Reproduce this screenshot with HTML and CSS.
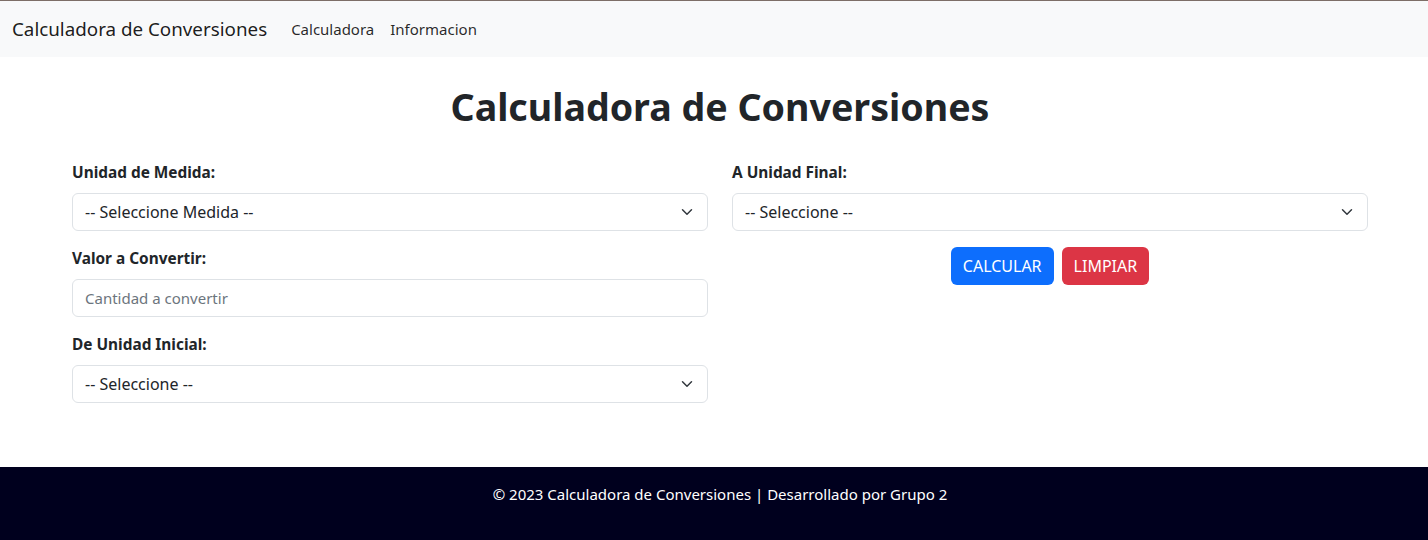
FILE: index.html
```html
<!DOCTYPE html>
<html lang="es">
<head>
    <meta charset="UTF-8">
    <meta name="viewport" content="width=device-width, initial-scale=1.0">
    <title>Calculadora de Conversiones</title>
    <link rel="stylesheet" href="styles.css">
</head>
<body>
    <nav class="navbar">
        <a class="brand" href="#">Calculadora de Conversiones</a>
        <ul class="nav-links">
            <li><a href="#">Calculadora</a></li>
            <li><a href="#">Informacion</a></li>
        </ul>
    </nav>

    <main class="main">
        <h1 class="title">Calculadora de Conversiones</h1>
        <div class="row">
            <div class="col">
                <div class="field">
                    <label for="medida">Unidad de Medida:</label>
                    <select id="medida" class="form-select">
                        <option>-- Seleccione Medida --</option>
                    </select>
                </div>
                <div class="field">
                    <label for="valor">Valor a Convertir:</label>
                    <input id="valor" class="form-control" type="text" placeholder="Cantidad a convertir">
                </div>
                <div class="field">
                    <label for="inicial">De Unidad Inicial:</label>
                    <select id="inicial" class="form-select">
                        <option>-- Seleccione --</option>
                    </select>
                </div>
            </div>
            <div class="col">
                <div class="field">
                    <label for="final">A Unidad Final:</label>
                    <select id="final" class="form-select">
                        <option>-- Seleccione --</option>
                    </select>
                </div>
                <div class="buttons">
                    <button class="btn btn-primary">CALCULAR</button>
                    <button class="btn btn-danger">LIMPIAR</button>
                </div>
            </div>
        </div>
    </main>

    <footer class="footer">
        <p>&copy; 2023 Calculadora de Conversiones | Desarrollado por Grupo 2</p>
    </footer>
</body>
</html>
```

FILE: styles.css
```css
* {
    margin: 0;
    padding: 0;
    box-sizing: border-box;
}

body {
    font-family: "Noto Sans", "Open Sans", sans-serif;
    font-size: 16px;
    line-height: 1.5;
    color: #212529;
    background: #fff;
    border-top: 1px solid #7d6e67;
}

a {
    text-decoration: none;
}

.navbar {
    height: 56px;
    background: #f8f9fa;
    display: flex;
    align-items: center;
    padding: 0 12px;
}

.brand {
    font-size: 18.8px;
    line-height: 30px;
    color: rgba(0, 0, 0, 0.9);
    margin-right: 16px;
}

.nav-links {
    list-style: none;
    display: flex;
}

.nav-links a {
    display: block;
    padding: 8px;
    font-size: 15px;
    line-height: 24px;
    color: rgba(0, 0, 0, 0.85);
}

.main {
    padding: 26px 60px 48px 72px;
}

.title {
    font-size: 37.6px;
    font-weight: 700;
    line-height: 48px;
    text-align: center;
    margin-bottom: 30px;
}

.row {
    display: flex;
    gap: 24px;
}

.col {
    flex: 1;
}

.field {
    margin-bottom: 16px;
}

.field label {
    display: block;
    font-size: 15.4px;
    line-height: 24px;
    font-weight: 700;
    margin-bottom: 8px;
}

.form-select,
.form-control {
    display: block;
    width: 100%;
    height: 38px;
    padding: 6px 12px;
    font-family: inherit;
    font-size: 16px;
    color: #212529;
    background-color: #fff;
    border: 1px solid #dee2e6;
    border-radius: 6px;
    appearance: none;
}

.form-control {
    font-size: 15px;
}

.form-select {
    padding-right: 36px;
    background-image: url("data:image/svg+xml,%3csvg xmlns='http://www.w3.org/2000/svg' viewBox='0 0 16 16'%3e%3cpath fill='none' stroke='%23343a40' stroke-linecap='round' stroke-linejoin='round' stroke-width='2' d='m2 5 6 6 6-6'/%3e%3c/svg%3e");
    background-repeat: no-repeat;
    background-position: right 12px center;
    background-size: 16px 12px;
}

.form-control::placeholder {
    color: #6c757d;
}

.buttons {
    display: flex;
    justify-content: center;
    gap: 8px;
}

.btn {
    height: 38px;
    padding: 6px 12px;
    font-family: inherit;
    font-size: 16px;
    color: #fff;
    border: none;
    border-radius: 6px;
    cursor: pointer;
}

.btn-primary {
    background: #0d6efd;
}

.btn-danger {
    background: #dc3545;
}

.footer {
    background: #00001e;
    color: #fff;
    text-align: center;
    font-size: 15px;
    height: 73px;
    padding: 16px 0 0 12px;
}
```
